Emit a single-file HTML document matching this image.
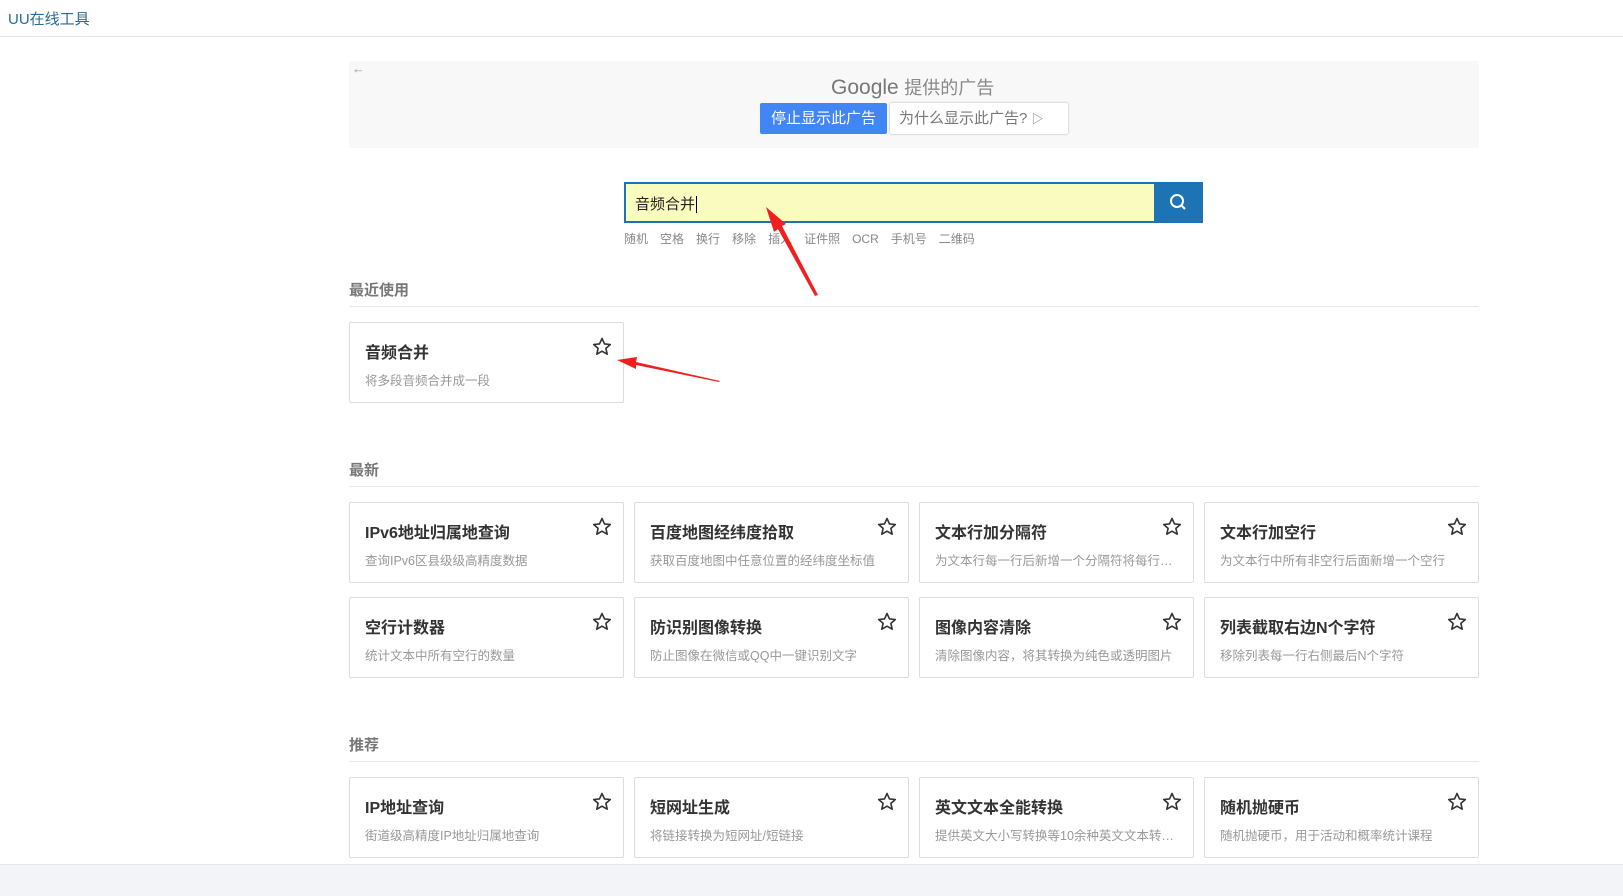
<!DOCTYPE html>
<html><head><meta charset="utf-8"><style>
*{box-sizing:border-box;margin:0;padding:0}
body{width:1623px;height:896px;overflow:hidden;background:#fff;font-family:"Liberation Sans","Noto Sans CJK SC",sans-serif;position:relative}
.top{position:absolute;left:0;top:0;width:1623px;height:37px;border-bottom:1px solid #e5e5e5}
.top span{position:absolute;left:8px;top:8px;font-size:15px;color:#2a6a96}
.ad{position:absolute;left:349px;top:61px;width:1130px;height:87px;background:#f8f8f8}
.abs{position:absolute}
.sec{position:absolute;left:349px;width:1130px;border-bottom:1px solid #e8e8e8;font-size:15px;font-weight:bold;color:#777;padding-bottom:6px}
.card{position:absolute;width:275px;height:81px;border:1px solid #ddd;border-radius:2px;background:#fff}
.card b{position:absolute;left:15px;top:16px;font-size:16px;color:#333;white-space:nowrap}
.card i{position:absolute;left:15px;top:47px;font-style:normal;font-size:12.5px;color:#999;white-space:nowrap;width:245px;overflow:hidden;text-overflow:ellipsis}
.card svg{position:absolute;right:11px;top:14px}
.tags{position:absolute;left:624px;top:230px;font-size:12px;color:#888}
.tags span{margin-right:12px}
</style></head><body>
<div class="top"><span>UU在线工具</span></div>
<div class="ad">
<div class="abs" style="left:3px;top:0;color:#999;font-size:13px">←</div>
<div class="abs" style="left:482px;top:13px;font-size:20px;color:#777"><span style="font-size:21px">Google</span> <span style="font-size:18px;color:#888">提供的广告</span></div>
<div class="abs" style="left:411px;top:42px;width:127px;height:31px;background:#4285f4;color:#fff;font-size:15px;line-height:31px;text-align:center;border-radius:2px">停止显示此广告</div>
<div class="abs" style="left:541px;top:42px;width:178px;height:31px;background:#fff;color:#777;font-size:15px;line-height:31px;padding-left:9px;box-shadow:0 0 2px rgba(0,0,0,.3);border-radius:2px">为什么显示此广告? <span style="font-size:12px">▷</span></div>
</div>
<div class="abs" style="left:624px;top:182px;width:531px;height:41px;background:#fafbbe;border:2px solid #1e73b4;border-right:none;font-size:15px;padding:9px 0 0 9px;color:#222">音频合并<span style="border-left:1px solid #000;margin-left:1px"></span></div>
<div class="abs" style="left:1154px;top:182px;width:49px;height:41px;background:#1e73b4"><svg width="49" height="41"><circle cx="23" cy="19" r="6" fill="none" stroke="#fff" stroke-width="2"/><line x1="27.5" y1="23.5" x2="31" y2="27" stroke="#fff" stroke-width="2"/></svg></div>
<div class="tags"><span>随机</span><span>空格</span><span>换行</span><span>移除</span><span>插入</span><span>证件照</span><span>OCR</span><span>手机号</span><span>二维码</span></div>
<div class="sec" style="top:279px">最近使用</div>
<div class="sec" style="top:459px">最新</div>
<div class="sec" style="top:734px">推荐</div>
<svg width="0" height="0" style="position:absolute"><defs><symbol id="st" viewBox="0 0 20 20"><path d="M10 1.5l2.5 5.4 5.8.6-4.4 3.9 1.3 5.8L10 14.2l-5.2 3 1.3-5.8L1.7 7.5l5.8-.6z" fill="none" stroke="#333" stroke-width="1.6" stroke-linejoin="round"/></symbol></defs></svg>
<div class="card" style="left:349px;top:322px"><b>音频合并</b><i>将多段音频合并成一段</i><svg width="20" height="20"><use href="#st"/></svg></div>

<div class="card" style="left:349px;top:502px"><b>IPv6地址归属地查询</b><i>查询IPv6区县级级高精度数据</i><svg width="20" height="20"><use href="#st"/></svg></div>
<div class="card" style="left:634px;top:502px"><b>百度地图经纬度拾取</b><i>获取百度地图中任意位置的经纬度坐标值</i><svg width="20" height="20"><use href="#st"/></svg></div>
<div class="card" style="left:919px;top:502px"><b>文本行加分隔符</b><i>为文本行每一行后新增一个分隔符将每行文本连接</i><svg width="20" height="20"><use href="#st"/></svg></div>
<div class="card" style="left:1204px;top:502px"><b>文本行加空行</b><i>为文本行中所有非空行后面新增一个空行</i><svg width="20" height="20"><use href="#st"/></svg></div>

<div class="card" style="left:349px;top:597px"><b>空行计数器</b><i>统计文本中所有空行的数量</i><svg width="20" height="20"><use href="#st"/></svg></div>
<div class="card" style="left:634px;top:597px"><b>防识别图像转换</b><i>防止图像在微信或QQ中一键识别文字</i><svg width="20" height="20"><use href="#st"/></svg></div>
<div class="card" style="left:919px;top:597px"><b>图像内容清除</b><i>清除图像内容，将其转换为纯色或透明图片</i><svg width="20" height="20"><use href="#st"/></svg></div>
<div class="card" style="left:1204px;top:597px"><b>列表截取右边N个字符</b><i>移除列表每一行右侧最后N个字符</i><svg width="20" height="20"><use href="#st"/></svg></div>

<div class="card" style="left:349px;top:777px"><b>IP地址查询</b><i>街道级高精度IP地址归属地查询</i><svg width="20" height="20"><use href="#st"/></svg></div>
<div class="card" style="left:634px;top:777px"><b>短网址生成</b><i>将链接转换为短网址/短链接</i><svg width="20" height="20"><use href="#st"/></svg></div>
<div class="card" style="left:919px;top:777px"><b>英文文本全能转换</b><i>提供英文大小写转换等10余种英文文本转换功能</i><svg width="20" height="20"><use href="#st"/></svg></div>
<div class="card" style="left:1204px;top:777px"><b>随机抛硬币</b><i>随机抛硬币，用于活动和概率统计课程</i><svg width="20" height="20"><use href="#st"/></svg></div>

<div class="abs" style="left:0;top:864px;width:1623px;height:32px;background:#f2f4f7;border-top:1px solid #e3e6ea"></div>

<svg class="abs" style="left:0;top:0" width="1623" height="896">
<polygon points="818,295 782,226 786,224 766,207 774,232 778,229 815,296" fill="#f02020"/>
<polygon points="720,381 636,362 637,357 617,360 636,369 636,365 719,382" fill="#f02020"/>
</svg>
</body></html>
